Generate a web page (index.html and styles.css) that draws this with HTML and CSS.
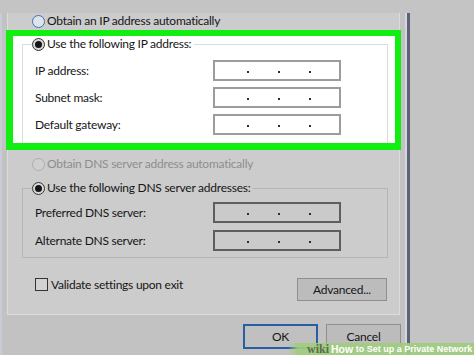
FILE: index.html
```html
<!DOCTYPE html>
<html>
<head>
<meta charset="utf-8">
<link rel="stylesheet" href="styles.css">
</head>
<body>
<div class="dialog">
  <div class="panel">
    <div class="opt-row first"><span class="radio focus"></span><span>Obtain an IP address automatically</span></div>
    <div class="highlight">
      <fieldset class="group light">
        <legend><span class="radio checked"></span><span>Use the following IP address:</span></legend>
        <div class="field first"><span class="lbl">IP address:</span><div class="ip"><i></i><i></i><i></i></div></div>
        <div class="field"><span class="lbl">Subnet mask:</span><div class="ip"><i></i><i></i><i></i></div></div>
        <div class="field"><span class="lbl">Default gateway:</span><div class="ip"><i></i><i></i><i></i></div></div>
      </fieldset>
    </div>
    <div class="opt-row disabled"><span class="radio off"></span><span>Obtain DNS server address automatically</span></div>
    <fieldset class="group dns">
      <legend><span class="radio checked"></span><span>Use the following DNS server addresses:</span></legend>
      <div class="field first"><span class="lbl">Preferred DNS server:</span><div class="ip dark"><i></i><i></i><i></i></div></div>
      <div class="field second"><span class="lbl">Alternate DNS server:</span><div class="ip dark"><i></i><i></i><i></i></div></div>
    </fieldset>
    <div class="bottom-row">
      <div class="check"><span class="box"></span><span>Validate settings upon exit</span></div>
      <div class="btn adv">Advanced...</div>
    </div>
  </div>
  <div class="buttons">
    <div class="btn ok">OK</div>
    <div class="btn cancel">Cancel</div>
  </div>
</div>
<div class="banner"><span class="wiki">wiki</span><span class="how">How</span><span class="rest">&nbsp;to Set up a Private Network</span></div>
</body>
</html>
```
FILE: styles.css
```css
html, body {
  margin: 0;
}
body {
  width: 474px;
  height: 355px;
  overflow: hidden;
  position: relative;
  background: #c4c4c4;
  font-family: Lato, "Noto Sans", sans-serif;
  font-size: 12px;
  letter-spacing: -0.25px;
  color: #161616;
}
.dialog {
  width: 410px;
  height: 355px;
  box-sizing: border-box;
  border-left: 2px solid #c8ccd4;
  border-right: 3px solid #5d6279;
  box-shadow: inset -2px 0 #d3d6dc;
  background: #c2c2c2;
  padding-left: 5px;
}
.panel {
  width: 393px;
  box-sizing: border-box;
  border: 1px solid #dcdcdc;
  border-top: none;
  background: #cccccc;
  padding-bottom: 13px;
}
.opt-row {
  display: flex;
  align-items: center;
  gap: 2px;
  height: 16px;
  line-height: 16px;
  margin-left: 24px;
}
.opt-row.first {
  margin-top: 13px;
}
.opt-row.disabled {
  margin-top: 6px;
  color: #8e8e8e;
}
.radio {
  width: 13px;
  height: 13px;
  box-sizing: border-box;
  border: 1px solid #333;
  border-radius: 50%;
  background: #d8d8d8;
  display: flex;
  align-items: center;
  justify-content: center;
  flex: none;
}
.radio.focus {
  border-color: #3d6fb5;
  background: #dfe4ea;
}
.radio.off {
  border-color: #adadad;
  background: #cfcfcf;
}
.radio.checked::after {
  content: "";
  width: 7px;
  height: 7px;
  border-radius: 50%;
  background: #141414;
}
.highlight {
  margin: 1px 0 0 -2px;
  width: 395px;
  box-sizing: border-box;
  border-style: solid;
  border-color: #12ee12;
  border-width: 6px 6px 7px 7px;
  background: #ffffff;
  padding: 0 7px 0 9px;
}
fieldset.group {
  margin: 0;
  padding: 0 0 8px 0;
  min-width: 0;
  border: 1px solid #b5b5b5;
}
fieldset.light {
  border-color: #dcdcdc;
  border-bottom: none;
}
fieldset.dns {
  margin: 8px 0 0 14px;
  width: 366px;
  box-sizing: border-box;
  padding-bottom: 6px;
}
legend {
  margin-left: 9px;
  padding: 0 3px 0 0;
  display: flex;
  align-items: center;
  gap: 2px;
  height: 16px;
  line-height: 16px;
}
.field {
  display: flex;
  align-items: center;
  height: 21px;
  margin-top: 6px;
  padding-left: 12px;
}
.field.first {
  margin-top: 8px;
}
.dns .field.first {
  margin-top: 6px;
}
.dns .field.second {
  margin-top: 7px;
}
.lbl {
  width: 178px;
  flex: none;
}
.ip {
  width: 128px;
  height: 21px;
  box-sizing: border-box;
  border: 2px solid #9c9c9c;
  background: #ffffff;
  display: flex;
  align-items: flex-start;
  gap: 29px;
  padding: 9px 0 0 32px;
}
.ip i {
  width: 2px;
  height: 2px;
  background: #2e2e2e;
}
.ip.dark {
  border-color: #5e5e5e;
  background: #cacaca;
}
.bottom-row {
  display: flex;
  align-items: flex-start;
  margin-top: 20px;
  padding-left: 27px;
  padding-right: 12px;
}
.check {
  display: flex;
  align-items: center;
  gap: 3px;
  height: 13px;
  line-height: 13px;
}
.box {
  width: 13px;
  height: 13px;
  box-sizing: border-box;
  border: 1px solid #333;
  background: #d2d2d2;
}
.btn {
  box-sizing: border-box;
  display: flex;
  align-items: center;
  justify-content: center;
  border: 1px solid #8f8f8f;
  background: #bcbcbc;
}
.adv {
  margin-left: auto;
  width: 90px;
  height: 23px;
}
.buttons {
  display: flex;
  justify-content: flex-end;
  gap: 8px;
  margin-top: 9px;
  padding-right: 6px;
}
.ok, .cancel {
  width: 75px;
  height: 25px;
}
.ok {
  border: 2px solid #2b5ca6;
  background: #c0c0c0;
}
.banner {
  position: absolute;
  left: 288px;
  right: 0;
  bottom: 0;
  height: 12px;
  display: flex;
  align-items: center;
  padding-left: 19px;
  background: linear-gradient(to right, rgba(160, 204, 126, 0) 0, rgba(160, 204, 126, 0.92) 10px);
  font-family: "Liberation Sans", Arial, sans-serif;
  font-weight: bold;
  letter-spacing: 0;
  color: #ffffff;
  white-space: nowrap;
}
.wiki {
  font-family: "Liberation Serif", serif;
  font-size: 12px;
  color: #5b6d48;
  margin-right: 2px;
}
.how {
  font-size: 10.5px;
}
.rest {
  font-size: 9px;
}
```
